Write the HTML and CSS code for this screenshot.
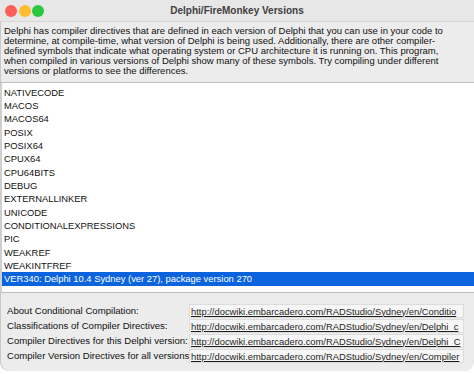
FILE: index.html
```html
<!DOCTYPE html>
<html>
<head>
<meta charset="utf-8">
<link rel="stylesheet" href="styles.css">
</head>
<body>
<div class="window">
  <div class="titlebar">
    <div class="lights">
      <span class="light red"></span>
      <span class="light yellow"></span>
      <span class="light green"></span>
    </div>
    <div class="title">Delphi/FireMonkey Versions</div>
    <div></div>
  </div>
  <div class="desc">Delphi has compiler directives that are defined in each version of Delphi that you can use in your code to determine, at compile-time, what version of Delphi is being used. Additionally, there are other compiler-defined symbols that indicate what operating system or CPU architecture it is running on. This program, when compiled in various versions of Delphi show many of these symbols. Try compiling under different versions or platforms to see the differences.</div>
  <div class="list">
    <div class="item">NATIVECODE</div>
    <div class="item">MACOS</div>
    <div class="item">MACOS64</div>
    <div class="item">POSIX</div>
    <div class="item">POSIX64</div>
    <div class="item">CPUX64</div>
    <div class="item">CPU64BITS</div>
    <div class="item">DEBUG</div>
    <div class="item">EXTERNALLINKER</div>
    <div class="item">UNICODE</div>
    <div class="item">CONDITIONALEXPRESSIONS</div>
    <div class="item">PIC</div>
    <div class="item">WEAKREF</div>
    <div class="item">WEAKINTFREF</div>
    <div class="item selected">VER340: Delphi 10.4 Sydney (ver 27), package version 270</div>
  </div>
  <div class="links">
    <div class="label">About Conditional Compilation:</div>
    <div class="edit">http://docwiki.embarcadero.com/RADStudio/Sydney/en/Conditio</div>
    <div class="label">Classifications of Compiler Directives:</div>
    <div class="edit">http://docwiki.embarcadero.com/RADStudio/Sydney/en/Delphi_c</div>
    <div class="label">Compiler Directives for this Delphi version:</div>
    <div class="edit">http://docwiki.embarcadero.com/RADStudio/Sydney/en/Delphi_C</div>
    <div class="label">Compiler Version Directives for all versions</div>
    <div class="edit">http://docwiki.embarcadero.com/RADStudio/Sydney/en/Compiler</div>
  </div>
</div>
</body>
</html>
```

FILE: styles.css
```css
html, body {
  margin: 0;
  padding: 0;
  background: #ffffff;
}
body {
  width: 474px;
  height: 374px;
  overflow: hidden;
  font-family: "Liberation Sans", Arial, sans-serif;
  color: #222222;
}
.window {
  width: 474px;
  height: 371px;
  background: #ececec;
  border-radius: 0 0 9px 9px;
  overflow: hidden;
  display: flex;
  flex-direction: column;
  box-shadow: inset 1px 0 0 #c9c9c9;
}
.titlebar {
  height: 22px;
  flex: none;
  display: grid;
  grid-template-columns: 1fr auto 1fr;
  align-items: center;
  background: #e7e7e7;
  border-bottom: 1px solid #d6d6d6;
  box-sizing: border-box;
}
.lights {
  display: flex;
  gap: 1.5px;
  padding-left: 5px;
  padding-top: 1px;
}
.light {
  width: 12px;
  height: 12px;
  border-radius: 50%;
  display: block;
}
.red { background: #fe5f57; }
.yellow { background: #febc2e; }
.green { background: #29c840; }
.title {
  font-weight: bold;
  font-size: 10px;
  color: #404040;
}
.desc {
  flex: none;
  height: 61px;
  box-sizing: border-box;
  padding: 4px 15px 0 4px;
  font-size: 9.5px;
  line-height: 10px;
  color: #111111;
  border-bottom: 1px solid #bdbdbd;
}
.list {
  flex: none;
  height: 210px;
  box-sizing: border-box;
  background: #ffffff;
  padding-top: 2.7px;
  border-bottom: 1px solid #bdbdbd;
  border-left: 2px solid #cfcfcf;
}
.item {
  height: 13.33px;
  line-height: 13.33px;
  font-size: 9.4px;
  padding-left: 2px;
  color: #111111;
  white-space: nowrap;
}
.item.selected {
  background: #0b63de;
  color: #ffffff;
}
.links {
  flex: 1;
  display: grid;
  grid-template-columns: 182px 275px;
  grid-auto-rows: 15px;
  align-items: center;
  padding: 10px 0 0 7px;
  font-size: 9.6px;
}
.label {
  white-space: nowrap;
  overflow: hidden;
  color: #111111;
}
.edit {
  height: 14px;
  line-height: 14px;
  box-sizing: border-box;
  background: #f6f6f6;
  border: 1px solid #dcdcdc;
  padding-left: 1px;
  white-space: nowrap;
  overflow: hidden;
  text-decoration: underline;
  color: #1e1e1e;
  font-size: 9.4px;
}
```
